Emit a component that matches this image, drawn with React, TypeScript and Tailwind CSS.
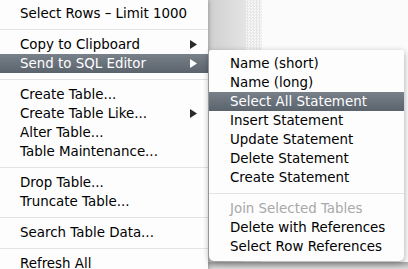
import React from 'react';

type Item = { label?: string; sep?: boolean; sub?: boolean; active?: boolean; disabled?: boolean };

const mainItems: Item[] = [
  { label: 'Select Rows – Limit 1000' },
  { sep: true },
  { label: 'Copy to Clipboard', sub: true },
  { label: 'Send to SQL Editor', sub: true, active: true },
  { sep: true },
  { label: 'Create Table...' },
  { label: 'Create Table Like...', sub: true },
  { label: 'Alter Table...' },
  { label: 'Table Maintenance...' },
  { sep: true },
  { label: 'Drop Table...' },
  { label: 'Truncate Table...' },
  { sep: true },
  { label: 'Search Table Data...' },
  { sep: true },
  { label: 'Refresh All' },
];

const subItems: Item[] = [
  { label: 'Name (short)' },
  { label: 'Name (long)' },
  { label: 'Select All Statement', active: true },
  { label: 'Insert Statement' },
  { label: 'Update Statement' },
  { label: 'Delete Statement' },
  { label: 'Create Statement' },
  { sep: true },
  { label: 'Join Selected Tables', disabled: true },
  { label: 'Delete with References' },
  { label: 'Select Row References' },
];

const Arrow: React.FC<{ white?: boolean }> = ({ white }) => (
  <svg width="7" height="9" viewBox="0 0 7 9" className="shrink-0">
    <path d="M0 0 L7 4.5 L0 9 Z" fill={white ? '#ffffff' : '#2a2a2a'} />
  </svg>
);

const MenuRows: React.FC<{ items: Item[]; padLeft: string }> = ({ items, padLeft }) => (
  <>
    {items.map((it, i) =>
      it.sep ? (
        <div key={i} className="h-[12px] flex items-center">
          <div className="h-px w-full bg-[#e3e3e3]" />
        </div>
      ) : (
        <div
          key={i}
          className={`h-[19px] flex items-center justify-between ${padLeft} pr-[11px] text-[13.4px] leading-none ${
            it.active
              ? 'bg-gradient-to-b from-[#78808a] to-[#5b636d] text-white'
              : it.disabled
              ? 'text-[#a8a8a8]'
              : 'text-black'
          }`}
        >
          <span>{it.label}</span>
          {it.sub && <Arrow white={it.active} />}
        </div>
      )
    )}
  </>
);

export default function App() {
  return (
    <div
      className="relative w-[408px] h-[269px] overflow-hidden bg-[#fbfbfb]"
      style={{ fontFamily: '"DejaVu Sans", "Noto Sans", sans-serif' }}
    >
      {/* background window behind the menus */}
      <div className="flex flex-col h-full">
        <div className="flex flex-1">
          <div className="w-[208px] bg-white" />
          <div className="w-[38px] bg-gradient-to-r from-[#cfcfcf] to-[#e4e4e4]" />
          <div className="w-[16px] bg-[repeating-conic-gradient(#e6e6e6_0%_25%,#f7f7f7_0%_50%)] bg-[length:3px_3px]" />
          <div className="flex-1 bg-[#fbfbfb]" />
        </div>
        <div className="h-[7px] flex">
          <div className="w-[208px] bg-white" />
          <div className="flex-1 bg-gradient-to-b from-[#a9a9a9] to-[#d9d9d9]" />
        </div>
      </div>

      {/* main context menu */}
      <div className="absolute left-0 top-0 w-[208px] pt-[4px] pb-[4px] bg-[#fdfdfd] shadow-[1px_0_4px_rgba(0,0,0,0.25)]">
        <MenuRows items={mainItems} padLeft="pl-[20px]" />
      </div>

      {/* submenu */}
      <div className="absolute left-[209px] top-[50px] w-[195px] pt-[4px] pb-[5px] bg-[#fdfdfd] rounded-b-[5px] rounded-t-[2px] shadow-[0_2px_6px_rgba(0,0,0,0.35)]">
        <MenuRows items={subItems} padLeft="pl-[21px]" />
      </div>
    </div>
  );
}
